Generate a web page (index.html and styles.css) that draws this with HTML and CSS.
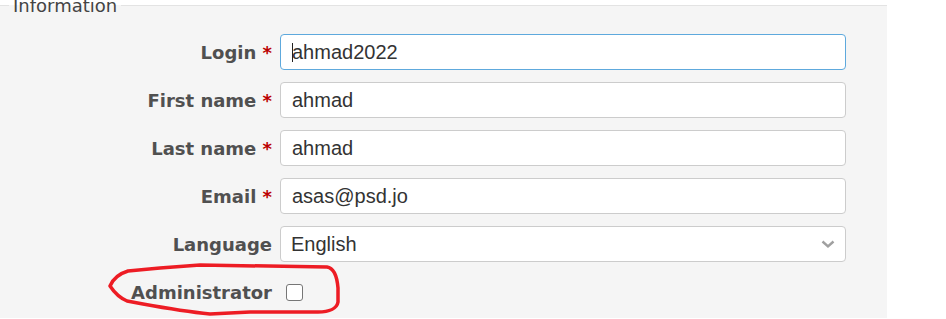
FILE: index.html
```html
<!DOCTYPE html>
<html lang="en">
<head>
  <meta charset="UTF-8" />
  <title>Information</title>
  <link rel="stylesheet" href="styles.css">
</head>
<body>
  <fieldset class="box">
    <legend>Information</legend>

    <div class="row">
      <label for="login">Login <span class="required">*</span></label>
      <div class="field"><input type="text" id="login" class="focused" value="ahmad2022"><span class="caret"></span></div>
    </div>
    <div class="row">
      <label for="firstname">First name <span class="required">*</span></label>
      <div class="field"><input type="text" id="firstname" value="ahmad"></div>
    </div>
    <div class="row">
      <label for="lastname">Last name <span class="required">*</span></label>
      <div class="field"><input type="text" id="lastname" value="ahmad"></div>
    </div>
    <div class="row">
      <label for="mail">Email <span class="required">*</span></label>
      <div class="field"><input type="text" id="mail" value="asas@psd.jo"></div>
    </div>
    <div class="row">
      <label for="language">Language</label>
      <div class="field select-wrap">
        <select id="language"><option>English</option></select>
        <svg class="chevron" width="14" height="9" viewBox="0 0 14 9"><path d="M1.5 1.5 L7 6.5 L12.5 1.5" fill="none" stroke="#a0a0a0" stroke-width="2.4"/></svg>
      </div>
    </div>
    <div class="row last">
      <label for="admin">Administrator</label>
      <div class="field"><input type="checkbox" id="admin"></div>
    </div>
  </fieldset>

  <svg class="scribble" width="946" height="319" viewBox="0 0 946 319">
    <path d="M110,286 C113,279 118,274 128,271 L160,268 L200,265 L327,267 C334,268 337,276 338,288 L338,302 C337,308 330,312 318,312 L250,312 L210,314 C190,312 165,308 143,304 L127,301 C120,298 114,292 110,286 Z"
          fill="none" stroke="#ed1c24" stroke-width="3.5" stroke-linejoin="round"/>
  </svg>
</body>
</html>
```

FILE: styles.css
```css
body {
  margin: 0;
  background: #fff;
  font-family: "DejaVu Sans", Verdana, sans-serif;
  color: #333;
  position: relative;
  height: 319px;
  overflow: hidden;
}

.box {
  box-sizing: border-box;
  width: 891px;
  margin: -5px 0 0 -4px;
  padding: 18px 0 8px 0;
  background: #f5f5f5;
  border: none;
  border-top: 1px solid #e3e3e3;
  border-left: 1px solid #e3e3e3;
  border-radius: 5px 0 0 0;
}

.box legend {
  margin-left: 12px;
  padding: 0 4px;
  font-size: 18px;
  line-height: 21px;
  color: #444;
}

.row {
  display: grid;
  grid-template-columns: 275px 566px;
  column-gap: 8px;
  align-items: center;
  height: 36px;
  margin-bottom: 12px;
}

.row.last {
  margin-bottom: 0;
}

.row label {
  text-align: right;
  font-weight: bold;
  font-size: 18px;
  color: #505050;
}

.required {
  color: #bb0000;
}

.field {
  position: relative;
  height: 36px;
  display: flex;
  align-items: center;
}

.field input[type="text"],
.field select {
  box-sizing: border-box;
  width: 100%;
  height: 36px;
  margin: 0;
  padding: 0 10px 0 11px;
  font-family: "Liberation Sans", Arial, sans-serif;
  font-size: 20px;
  color: #333;
  background: #fff;
  border: 1px solid #ccc;
  border-radius: 4px;
  outline: none;
}

.field input.focused {
  border-color: #5ea9dd;
}

.caret {
  position: absolute;
  left: 12px;
  top: 9px;
  width: 1px;
  height: 19px;
  background: #222;
}

.field select {
  appearance: none;
  -webkit-appearance: none;
  padding-left: 10px;
}

.chevron {
  position: absolute;
  right: 11px;
  top: 14px;
  pointer-events: none;
}

.field input[type="checkbox"] {
  appearance: none;
  -webkit-appearance: none;
  box-sizing: border-box;
  width: 17px;
  height: 17px;
  margin: 0 0 0 6px;
  background: #fff;
  border: 1.5px solid #767676;
  border-radius: 3px;
}

.scribble {
  position: absolute;
  left: 0;
  top: 0;
  pointer-events: none;
}
```
